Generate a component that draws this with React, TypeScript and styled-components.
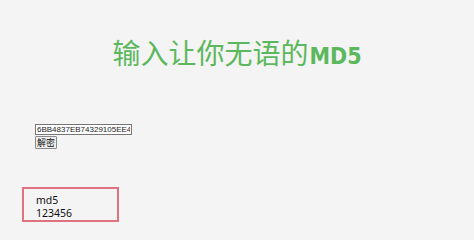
import styled, { createGlobalStyle } from "styled-components";

const GlobalStyle = createGlobalStyle`
  html, body {
    margin: 0;
    padding: 0;
    background: #f4f4f4;
  }
  body {
    font-family: "Noto Sans", "Noto Sans CJK SC", sans-serif;
  }
`;

const Page = styled.div`
  width: 474px;
  height: 237px;
  background: #f4f4f4;
  display: flex;
  flex-direction: column;
  overflow: hidden;
`;

const Title = styled.h1`
  margin: 34px 0 0;
  height: 36px;
  text-align: center;
  font-family: "Noto Sans CJK SC", sans-serif;
  font-size: 28px;
  font-weight: 400;
  line-height: 36px;
  color: #5cb85c;
  letter-spacing: 0;
`;

const Latin = styled.span`
  font-family: "DejaVu Sans Condensed", "Liberation Sans", sans-serif;
  font-size: 23px;
  font-weight: 700;
  margin-left: 1px;
`;

const Form = styled.div`
  margin: 54px 0 0 35px;
  display: flex;
  flex-direction: column;
  align-items: flex-start;
  gap: 1px;
`;

const HashInput = styled.input`
  box-sizing: border-box;
  width: 97px;
  height: 11px;
  padding: 0 1px;
  border: 1px solid #767676;
  background: #fff;
  font-family: "Liberation Sans", sans-serif;
  font-size: 8px;
  line-height: 9px;
  color: #222;
  outline: none;
`;

const DecodeButton = styled.button`
  box-sizing: border-box;
  width: 22px;
  height: 13px;
  padding: 0;
  border: 1px solid #8a8a8a;
  border-radius: 1px;
  background: #efefef;
  font-family: "Noto Sans CJK SC", sans-serif;
  font-size: 9px;
  line-height: 11px;
  color: #111;
`;

const ResultBox = styled.div`
  box-sizing: border-box;
  margin: 38px 0 0 22px;
  width: 97px;
  height: 35px;
  border: 2px solid #e0717f;
  padding: 5px 0 0 12px;
  font-family: "Noto Sans", sans-serif;
  font-size: 10.5px;
  line-height: 12.5px;
  color: #111;
`;

export default function App() {
  return (
    <Page>
      <GlobalStyle />
      <Title>
        输入让你无语的<Latin>MD5</Latin>
      </Title>
      <Form>
        <HashInput defaultValue="6BB4837EB74329105EE4568DDA7DC67ED2CA2AD9" />
        <DecodeButton>解密</DecodeButton>
      </Form>
      <ResultBox>
        <div>md5</div>
        <div>123456</div>
      </ResultBox>
    </Page>
  );
}
